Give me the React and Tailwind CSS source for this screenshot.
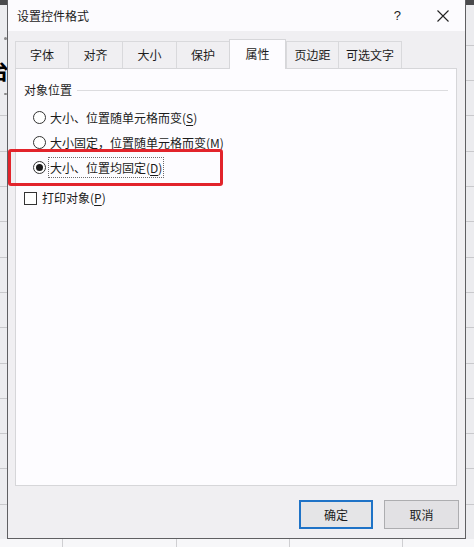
import React from "react";

const FONT = { fontFamily: '"Noto Sans CJK SC", "Noto Sans", sans-serif' };

function HLines({ count, first, step, color = "#c9c9cc" }) {
  const items = [];
  for (let i = 0; i < count; i++) items.push(i);
  return (
    <div className="flex flex-col">
      <div style={{ height: first }} />
      {items.map((i) => (
        <div key={i} className="flex flex-col">
          <div className="h-[1px]" style={{ background: color }} />
          <div style={{ height: step - 1 }} />
        </div>
      ))}
    </div>
  );
}

function Radio({ checked, children }) {
  return (
    <div className="flex items-center h-[25px]">
      <span className="w-[13px] h-[13px] rounded-full border border-[#333] bg-white flex items-center justify-center shrink-0">
        {checked && <span className="w-[7px] h-[7px] rounded-full bg-[#1a1a1a]" />}
      </span>
      <span className="ml-[4px]">{children}</span>
    </div>
  );
}

const tabs = [
  { t: "字体", w: 54 },
  { t: "对齐", w: 55 },
  { t: "大小", w: 55 },
  { t: "保护", w: 54 },
  { t: "属性", w: 57, active: true },
  { t: "页边距", w: 53 },
  { t: "可选文字", w: 64 },
];

export default function App() {
  return (
    <div
      className="w-[474px] h-[547px] overflow-hidden relative flex flex-col bg-[#f4f4f6] text-[12px] text-[#1c1c1c]"
      style={FONT}
    >
      <div className="flex h-[539px]">
        {/* left strip of spreadsheet */}
        <div className="w-[7px] overflow-hidden bg-[#ececef] flex flex-col">
          <div className="h-[5px] bg-[#4a4a4c]" />
          <div className="h-[35px]" />
          <div className="h-[3px] w-[3px] bg-[#888] rounded-full ml-[4px]" />
          <div className="h-[18px]" />
          <div className="text-[22px] leading-[24px] text-black ml-[-13px] font-bold">台</div>
          <div className="h-[13px]" />
          <div className="h-[3px] w-[3px] bg-[#888] rounded-full ml-[4px]" />
          <HLines count={12} first={20} step={35.3} />
        </div>

        {/* dialog */}
        <div className="w-[459px] border-l border-r border-b border-[#5f5f62] flex flex-col bg-[#f0eff2]">
          {/* title bar */}
          <div className="h-[31px] bg-[#fcfbfe] flex items-center pl-[9px] pr-[16px]">
            <span className="text-[12px]">设置控件格式</span>
            <span className="ml-auto text-[13px] mr-[36px]" style={{ fontFamily: '"Liberation Sans", sans-serif' }}>?</span>
            <svg width="12" height="12" viewBox="0 0 12 12">
              <path d="M0.5 0.5 L11.5 11.5 M11.5 0.5 L0.5 11.5" stroke="#222" strokeWidth="1.1" fill="none" />
            </svg>
          </div>

          {/* body */}
          <div className="flex flex-col pl-[7px] pr-[8px] pt-[8px]">
            {/* tabs */}
            <div className="flex items-end h-[30px] relative z-10">
              {tabs.map((tab) =>
                tab.active ? (
                  <div
                    key={tab.t}
                    className="h-[30px] bg-[#fdfcff] border-l border-r border-t border-[#d6d6d9] flex items-center justify-center pb-[2px]"
                    style={{ width: tab.w }}
                  >
                    {tab.t}
                  </div>
                ) : (
                  <div
                    key={tab.t}
                    className="h-[27px] mb-[1px] bg-[#f0eff2] border-l border-t border-r border-[#d9d9dc] -mr-[1px] flex items-center justify-center"
                    style={{ width: tab.w }}
                  >
                    {tab.t}
                  </div>
                )
              )}
            </div>

            {/* panel */}
            <div className="h-[418px] -mt-[1px] bg-[#fdfcff] border border-[#d6d6d9] flex flex-col pl-[8px] pt-[13px]">
              <div className="flex items-center h-[16px]">
                <span>对象位置</span>
                <div className="flex-1 h-[1px] bg-[#dcdcdf] ml-[5px] mr-[8px]" />
              </div>
              <div className="flex flex-col ml-[9px] mt-[7px]">
                <Radio>
                  大小、位置随单元格而变(<span className="underline underline-offset-2">S</span>)
                </Radio>
                <Radio>
                  大小固定，位置随单元格而变(<span className="underline underline-offset-2">M</span>)
                </Radio>
                <Radio checked>
                  <span className="border border-dotted border-[#6b6b6b] px-[1px] py-[1px] -ml-[2px]">
                    大小、位置均固定(<span className="underline underline-offset-2">D</span>)
                  </span>
                </Radio>
              </div>
              <div className="flex items-center h-[20px] mt-[8px]">
                <span className="w-[13px] h-[13px] border border-[#333] bg-white shrink-0" />
                <span className="ml-[5px]">
                  打印对象(<span className="underline underline-offset-2">P</span>)
                </span>
              </div>
            </div>

            {/* buttons */}
            <div className="flex justify-end mt-[14px] pr-[-2px] -mr-[2px]">
              <div className="w-[74px] h-[29px] border-2 border-[#1f73c7] bg-[#e5e5e7] flex items-center justify-center">
                确定
              </div>
              <div className="w-[75px] h-[29px] border border-[#adadb0] bg-[#e2e1e4] flex items-center justify-center ml-[11px]">
                取消
              </div>
            </div>
          </div>
        </div>

        {/* right strip */}
        <div className="w-[8px] bg-[#ececef] flex flex-col overflow-hidden">
          <div className="h-[15px] bg-[#4a4a4c]" />
          <HLines count={14} first={40} step={35.3} />
        </div>
      </div>

      {/* bottom strip */}
      <div className="h-[8px] flex bg-[#f7f7f9]">
        <div className="w-[63px] border-r border-[#cfcfd2]" />
        <div className="w-[114px] border-r border-[#cfcfd2]" />
        <div className="w-[113px] border-r border-[#cfcfd2]" />
        <div className="w-[113px] border-r border-[#cfcfd2]" />
        <div className="flex-1" />
      </div>

      {/* red annotation box */}
      <div className="absolute left-[8px] top-[149px] w-[215px] h-[37px] border-[3px] border-[#e2242b] rounded-[3px]" />
    </div>
  );
}
